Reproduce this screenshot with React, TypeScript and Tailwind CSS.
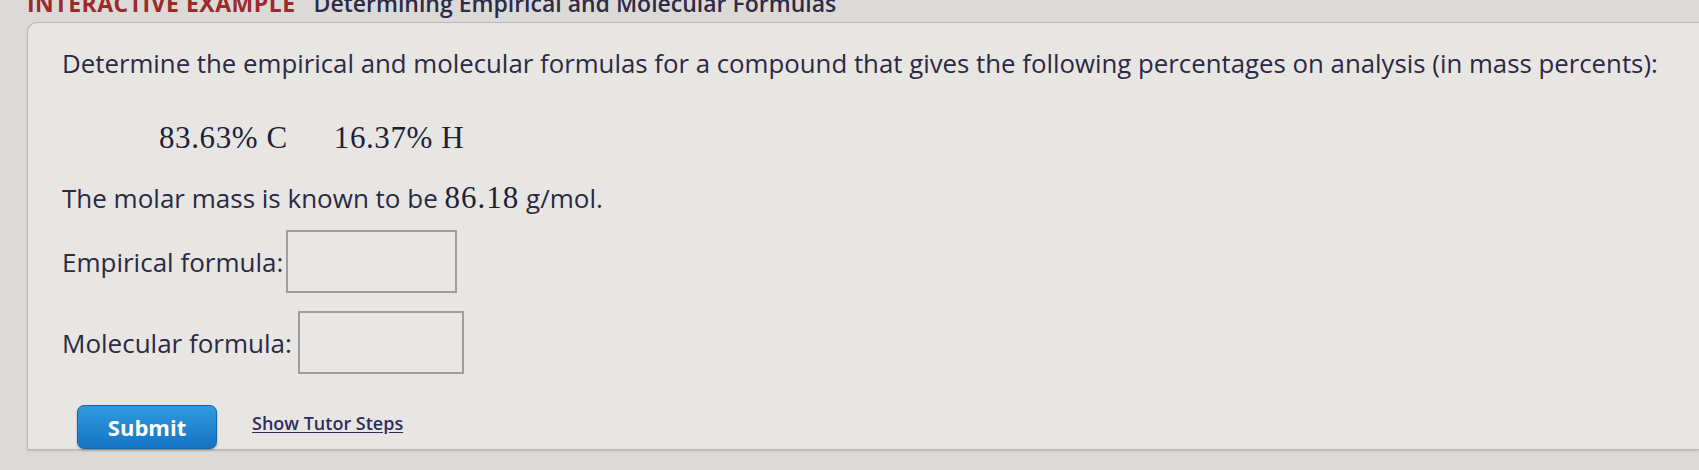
import React from 'react';

const sans = "font-['Open_Sans','Noto_Sans',sans-serif]";
const serif = "font-['Liberation_Serif','Times_New_Roman',serif]";

const AnswerBox: React.FC<{ width: string }> = ({ width }) => (
  <div className={`${width} h-[63px] border-2 border-[#a09ca3] bg-[#e9e7e4]`} />
);

export default function App() {
  return (
    <div className="w-[1699px] h-[470px] overflow-hidden bg-[#dcdad6] flex flex-col">
      <div className="h-[22px] shrink-0 pl-[27px]">
        <div className={`-mt-[11px] leading-[28px] text-[23px] whitespace-nowrap ${sans}`}>
          <span className="font-bold text-[#9b2a2a] tracking-[0.5px]">INTERACTIVE EXAMPLE</span>
          <span className="ml-[18px] font-semibold text-[#2d2b48]">Determining Empirical and Molecular Formulas</span>
        </div>
      </div>

      <div className="ml-[27px] h-[428px] rounded-tl-[10px] border-l border-t border-b border-[#bdbab7] bg-[#e8e6e2] shadow-[0_1px_2px_rgba(0,0,0,0.15)] pl-[34px] pt-[22px] flex flex-col text-[#2b2944]">
        <p className={`text-[25.8px] leading-[36px] whitespace-nowrap ${sans}`}>
          Determine the empirical and molecular formulas for a compound that gives the following percentages on analysis (in mass percents):
        </p>

        <div className={`mt-[37px] ml-[97px] h-[40px] flex gap-[46px] text-[31px] leading-[40px] tracking-[0.6px] text-[#211f38] ${serif}`}>
          <span>83.63% C</span>
          <span>16.37% H</span>
        </div>

        <p className={`mt-[22px] h-[36px] text-[26px] leading-[36px] whitespace-nowrap ${sans}`}>
          The molar mass is known to be{' '}
          <span className={`${serif} text-[31px] tracking-[1px] text-[#211f38]`}>86.18</span> g/mol.
        </p>

        <div className="mt-[14px] flex items-center gap-[3px]">
          <span className={`text-[26px] leading-[36px] ${sans}`}>Empirical formula:</span>
          <AnswerBox width="w-[171px]" />
        </div>

        <div className="mt-[18px] flex items-center gap-[6px]">
          <span className={`text-[26px] leading-[36px] ${sans}`}>Molecular formula:</span>
          <AnswerBox width="w-[166px]" />
        </div>

        <div className="mt-[31px] ml-[15px] flex items-center gap-[35px]">
          <button
            className={`w-[140px] h-[44px] rounded-[7px] border border-[#1366a8] bg-gradient-to-b from-[#2f9be0] to-[#1474c2] text-white text-[22px] font-bold shadow-[0_1px_2px_rgba(0,0,0,0.3)] ${sans}`}
          >
            Submit
          </button>
          <a
            className={`pb-[7px] text-[18px] font-semibold text-[#2e2c5c] underline underline-offset-2 ${sans}`}
          >
            Show Tutor Steps
          </a>
        </div>
      </div>
    </div>
  );
}
